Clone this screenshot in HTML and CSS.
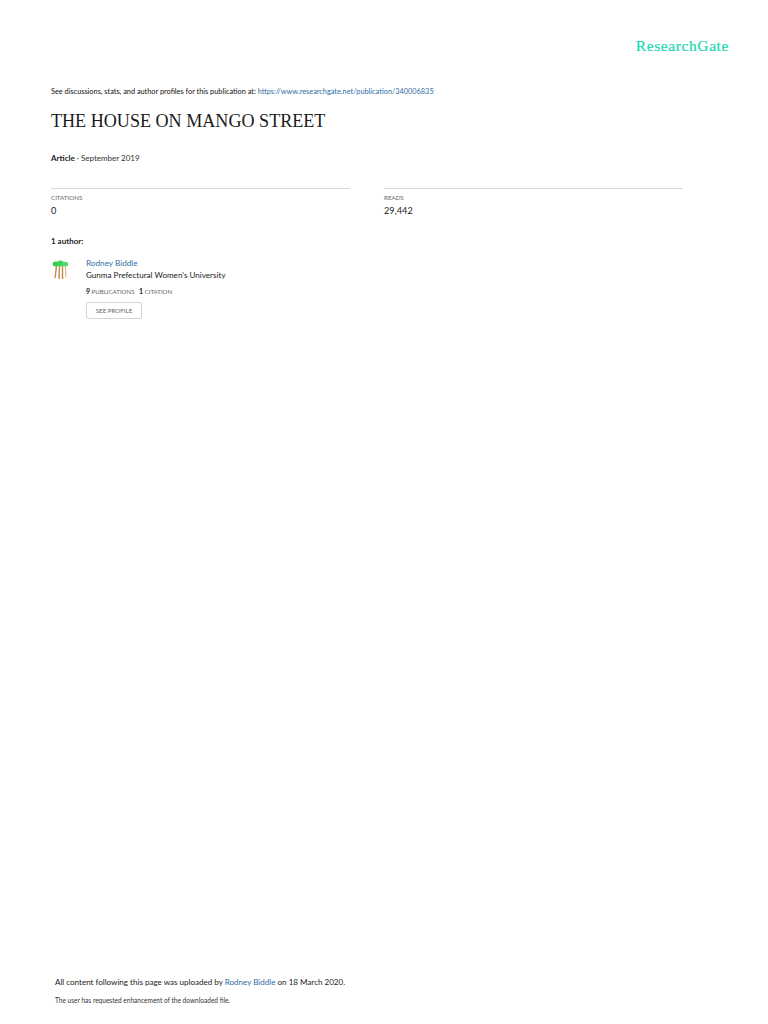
FILE: index.html
```html
<!DOCTYPE html>
<html lang="en">
<head>
<meta charset="utf-8">
<title>The House on Mango Street</title>
<link rel="stylesheet" href="styles.css">
</head>
<body>
<div class="page">
  <header class="brand-row"><span class="brand">ResearchGate</span></header>
  <p class="discuss">See discussions, stats, and author profiles for this publication at: <a class="link" href="#">https://www.researchgate.net/publication/340006835</a></p>
  <h1 class="title">THE HOUSE ON MANGO STREET</h1>
  <p class="meta"><b class="strong">Article</b> · September 2019</p>
  <section class="stats">
    <div class="stat"><div class="stat-label">CITATIONS</div><div class="stat-value">0</div></div>
    <div class="stat"><div class="stat-label">READS</div><div class="stat-value">29,442</div></div>
  </section>
  <p class="authors-head">1 author:</p>
  <section class="author">
    <svg class="avatar" width="20" height="22" viewBox="0 0 20 22" aria-hidden="true">
      <path d="M5.5 8 L4 20 M8.5 8 L8 21 M11.5 8 L11.5 21" stroke="#c58a4a" stroke-width="1.4" fill="none"/>
      <path d="M14.5 8 L14.8 19.5" stroke="#d9b07a" stroke-width="1" fill="none"/>
      <ellipse cx="4.8" cy="6" rx="3.2" ry="2.5" fill="#35c94f"/>
      <ellipse cx="9.4" cy="5.4" rx="3.4" ry="3" fill="#3bd35a"/>
      <ellipse cx="14" cy="6" rx="3.2" ry="2.3" fill="#4fdb6e"/>
    </svg>
    <div class="author-body">
      <a class="author-name link" href="#">Rodney Biddle</a>
      <div class="author-inst">Gunma Prefectural Women's University</div>
      <div class="author-stats"><b class="count">9</b> PUBLICATIONS <b class="count second">1</b> CITATION</div>
      <a class="profile-btn" href="#">SEE PROFILE</a>
    </div>
  </section>
  <footer class="footer">
    <p class="upload">All content following this page was uploaded by <a class="link" href="#">Rodney Biddle</a> on 18 March 2020.</p>
    <p class="enh">The user has requested enhancement of the downloaded file.</p>
  </footer>
</div>
</body>
</html>
```
FILE: styles.css
```css
* { box-sizing: border-box; }
html, body { margin: 0; background: #fff; }
body { font-family: Lato, "Noto Sans", sans-serif; color: #111; }
p { margin: 0; }
a { text-decoration: none; }
.link { color: #2f6ea5; }
.page { height: 1024px; padding: 37px 39px 0 51px; display: flex; flex-direction: column; overflow: hidden; }
.brand-row { display: flex; justify-content: flex-end; height: 18px; }
.brand { font-family: "Liberation Serif", serif; font-size: 15.5px; line-height: 18px; color: #14d9b0; letter-spacing: .6px; -webkit-text-stroke: .2px #14d9b0; }
.discuss { margin-top: 32px; font-size: 7.35px; line-height: 10px; }
.title { margin: 12px 0 0; font-family: "Liberation Serif", serif; font-weight: 400; font-size: 18.1px; line-height: 24px; color: #1a1a1a; }
.meta { margin-top: 20px; font-size: 8px; line-height: 10px; color: #333; }
.strong { font-weight: 700; color: #222; }
.stats { margin-top: 25px; display: grid; grid-template-columns: 299px 299px; column-gap: 34px; }
.stat { border-top: 1px solid #d8d8d8; padding-top: 5px; }
.stat-label { font-size: 6.2px; line-height: 7px; color: #666; }
.stat-value { margin-top: 3px; font-size: 9.2px; line-height: 14px; color: #222; }
.authors-head { margin-top: 18px; font-size: 8px; line-height: 10px; font-weight: 700; color: #222; }
.author { margin-top: 12px; display: flex; align-items: flex-start; }
.avatar { flex: none; }
.author-body { margin-left: 15px; display: flex; flex-direction: column; align-items: flex-start; }
.author-name { font-size: 8.2px; line-height: 11px; }
.author-inst { margin-top: 1px; font-size: 8.1px; line-height: 11px; color: #222; }
.author-stats { margin-top: 6px; font-size: 6.1px; line-height: 9px; color: #666; }
.count { font-size: 7px; font-weight: 700; color: #222; }
.second { margin-left: 3px; }
.profile-btn { margin-top: 6px; width: 56px; height: 17px; border: 1px solid #d5d5d5; border-radius: 2px; font-size: 6.2px; line-height: 15px; text-align: center; color: #666; }
.footer { margin-top: auto; padding: 0 0 19px 4px; }
.upload { font-size: 8.05px; line-height: 12px; color: #1a1a1a; }
.enh { margin-top: 8px; font-size: 6.55px; line-height: 9px; color: #333; }
```
